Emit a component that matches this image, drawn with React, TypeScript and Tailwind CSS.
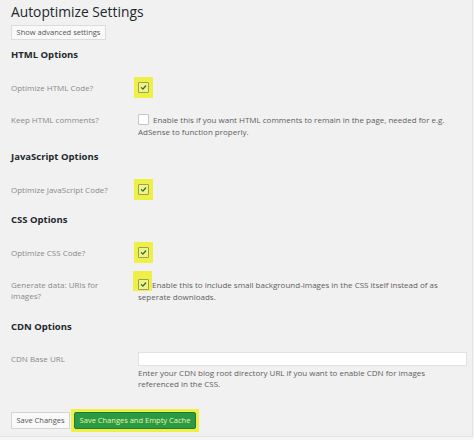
import React from "react";

type HL = "none" | "mid" | "up";

function Box({ checked = false, hl = "none" }: { checked?: boolean; hl?: HL }) {
  const on = hl !== "none";
  return (
    <span className="relative inline-block h-[11px] w-[11px] shrink-0 align-[-2px]">
      {hl === "mid" && (
        <span className="absolute left-[-4px] top-[-5px] h-[21px] w-[19px] bg-[#eef046]" />
      )}
      {hl === "up" && (
        <span className="absolute left-[-5px] top-[-8px] h-[20px] w-[19px] bg-[#eef046]" />
      )}
      <span
        className={
          on
            ? "absolute inset-0 flex items-center justify-center rounded-[1px] border border-[#9c9f5a] bg-[#f1f38a]"
            : "absolute inset-0 flex items-center justify-center rounded-[1px] border border-[#c3c5c8] bg-white"
        }
      >
        {checked && (
          <svg viewBox="0 0 10 10" className="h-[7px] w-[7px]">
            <path d="M2 5.2 L4.1 7.3 L8 2.8" fill="none" stroke="#2a6e25" strokeWidth="1.9" strokeLinecap="round" strokeLinejoin="round" />
          </svg>
        )}
      </span>
    </span>
  );
}

function Heading({ children, mt }: { children: React.ReactNode; mt: string }) {
  return (
    <h2 className={`${mt} h-[12px] text-[9.5px] font-bold leading-[12px] text-[#23282d]`}>{children}</h2>
  );
}

export default function App() {
  return (
    <div className="h-[440px] w-[474px] bg-[#f6f6f6] font-['Open_Sans','Liberation_Sans',sans-serif]">
      <div className="h-[437px] w-[473px] border-b border-r border-[#e3e3e3] bg-[#f1f1f1] pl-[11px]">
        <h1 className="h-[22px] text-[13.8px] font-normal leading-[23px] text-[#23282d]">Autoptimize Settings</h1>
        <button className="mt-[3px] flex h-[15px] w-[95px] items-center justify-center border border-[#dcdcdc] bg-[#f9f9f9] text-[7.5px] leading-none text-[#555]">
          Show advanced settings
        </button>

        <Heading mt="mt-[9px]">HTML Options</Heading>

        <div className="mt-[16px] flex h-[21px] items-center">
          <div className="w-[127px] shrink-0 text-[8px] text-[#8a8a8a]">Optimize HTML Code?</div>
          <div className="flex h-[21px] items-center">
            <Box checked hl="mid" />
          </div>
        </div>

        <div className="mt-[16px] flex">
          <div className="w-[127px] shrink-0 text-[8px] leading-[12px] text-[#8a8a8a]">Keep HTML comments?</div>
          <div className="w-[329px] text-[8px] leading-[12px] text-[#5e5e5e]">
            <Box />
            <span className="ml-[4px]">
              Enable this if you want HTML comments to remain in the page, needed for e.g. AdSense to function properly.
            </span>
          </div>
        </div>

        <Heading mt="mt-[13px]">JavaScript Options</Heading>

        <div className="mt-[16px] flex h-[21px] items-center">
          <div className="w-[127px] shrink-0 text-[8px] text-[#8a8a8a]">Optimize JavaScript Code?</div>
          <div className="flex h-[21px] items-center">
            <Box checked hl="mid" />
          </div>
        </div>

        <Heading mt="mt-[14px]">CSS Options</Heading>

        <div className="mt-[16px] flex h-[21px] items-center">
          <div className="w-[127px] shrink-0 text-[8px] text-[#8a8a8a]">Optimize CSS Code?</div>
          <div className="flex h-[21px] items-center">
            <Box checked hl="mid" />
          </div>
        </div>

        <div className="mt-[16px] flex">
          <div className="w-[100px] shrink-0 text-[8px] leading-[11px] text-[#8a8a8a]">Generate data: URIs for images?</div>
          <div className="ml-[27px] w-[329px] text-[8px] leading-[12px] text-[#5e5e5e]">
            <Box checked hl="up" />
            <span className="ml-[3px]">
              Enable this to include small background-images in the CSS itself instead of as seperate downloads.
            </span>
          </div>
        </div>

        <Heading mt="mt-[18px]">CDN Options</Heading>

        <div className="mt-[19px] flex">
          <div className="w-[127px] shrink-0 pt-[1px] text-[8px] leading-[12px] text-[#8a8a8a]">CDN Base URL</div>
          <div className="w-[329px]">
            <div className="h-[14px] w-[329px] border border-[#e2e2e2] bg-white" />
            <p className="mt-[1px] text-[8px] leading-[11px] text-[#5e5e5e]">
              Enter your CDN blog root directory URL if you want to enable CDN for images referenced in the CSS.
            </p>
          </div>
        </div>

        <div className="mt-[20px] flex items-center">
          <button className="flex h-[17px] w-[59px] items-center justify-center border border-[#d5d5d5] bg-[#f9f9f9] text-[7.5px] leading-none text-[#555]">
            Save Changes
          </button>
          <div className="ml-[1px] flex h-[23px] w-[128px] items-center justify-center bg-[#eef046]">
            <button className="flex h-[17px] w-[122px] items-center justify-center rounded-[2px] border border-[#1f7a32] bg-[#2b9a44] text-[7.5px] leading-none text-[#eaf5a8]">
              Save Changes and Empty Cache
            </button>
          </div>
        </div>
      </div>
    </div>
  );
}
